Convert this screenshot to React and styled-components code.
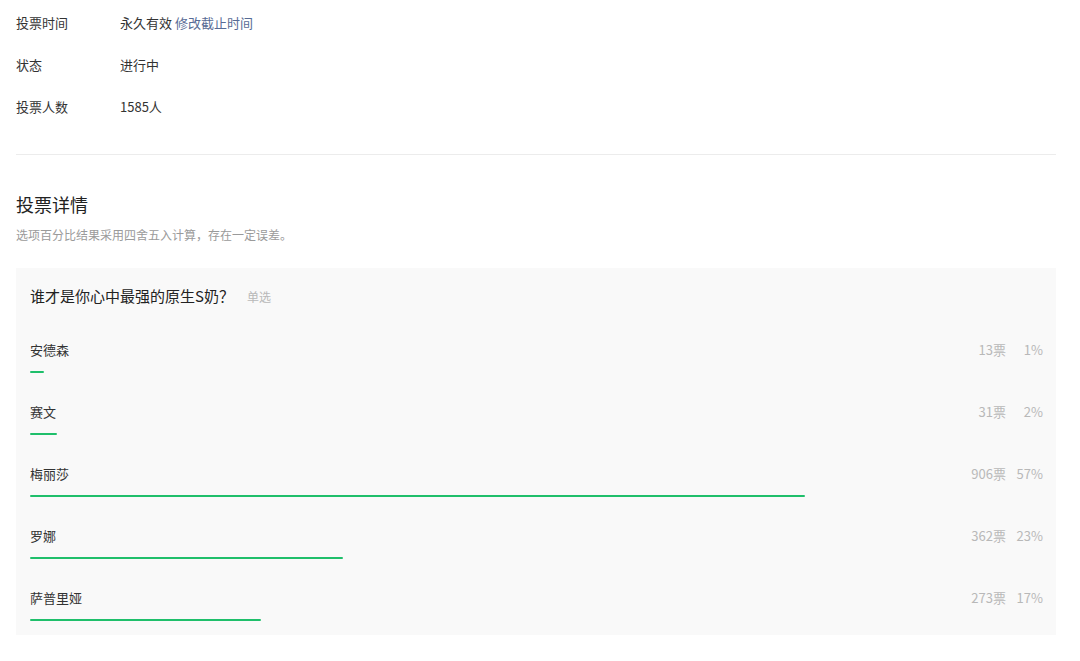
import React from "react";
import styled, { createGlobalStyle } from "styled-components";

const Global = createGlobalStyle`
  html, body { margin: 0; padding: 0; background: #fff; }
  body { font-family: "Noto Sans CJK SC", "Noto Sans", sans-serif; color: #333; }
`;

const Page = styled.div`
  padding: 1px 24px 0 16px;
`;

const InfoRow = styled.div`
  display: flex;
  align-items: center;
  height: 42px;
  font-size: 13px;
`;

const Label = styled.div`
  width: 104px;
  color: #333;
`;

const Value = styled.div`
  color: #333;
`;

const Link = styled.a`
  color: #576b95;
  text-decoration: none;
  margin-left: 3px;
`;

const Divider = styled.div`
  height: 1px;
  background: #ececec;
  margin: 27px 0 36px;
`;

const Title = styled.h2`
  margin: 0;
  font-size: 18px;
  font-weight: 400;
  line-height: 26px;
  color: #222;
`;

const Subtitle = styled.p`
  margin: 9px 0 24px;
  font-size: 12px;
  line-height: 18px;
  color: #9a9a9a;
`;

const Card = styled.div`
  background: #f9f9f9;
  padding: 16px 13px 14px 14px;
`;

const Question = styled.div`
  font-size: 15px;
  line-height: 24px;
  color: #222;
  display: flex;
  align-items: baseline;
  margin-bottom: 33px;
`;

const Tag = styled.span`
  font-size: 12px;
  color: #b8b8b8;
  margin-left: 13px;
`;

const Option = styled.div`
  & + & {
    margin-top: 31px;
  }
`;

const OptionHead = styled.div`
  display: flex;
  align-items: center;
  line-height: 16px;
  font-size: 13px;
`;

const Name = styled.div`
  flex: 1;
  color: #333;
`;

const Votes = styled.span`
  color: #b8b8b8;
`;

const Percent = styled.span`
  color: #b8b8b8;
  min-width: 37px;
  text-align: right;
`;

const Bar = styled.div`
  height: 2px;
  margin-top: 13px;
  background: #1fbf6b;
  border-radius: 1px;
`;

const options = [
  { name: "安德森", votes: 13, pct: 1 },
  { name: "赛文", votes: 31, pct: 2 },
  { name: "梅丽莎", votes: 906, pct: 57 },
  { name: "罗娜", votes: 362, pct: 23 },
  { name: "萨普里娅", votes: 273, pct: 17 },
];

export default function App() {
  return (
    <Page>
      <Global />
      <InfoRow>
        <Label>投票时间</Label>
        <Value>
          永久有效<Link href="#">修改截止时间</Link>
        </Value>
      </InfoRow>
      <InfoRow>
        <Label>状态</Label>
        <Value>进行中</Value>
      </InfoRow>
      <InfoRow>
        <Label>投票人数</Label>
        <Value>1585人</Value>
      </InfoRow>
      <Divider />
      <Title>投票详情</Title>
      <Subtitle>选项百分比结果采用四舍五入计算，存在一定误差。</Subtitle>
      <Card>
        <Question>
          谁才是你心中最强的原生S奶？<Tag>单选</Tag>
        </Question>
        {options.map((o) => (
          <Option key={o.name}>
            <OptionHead>
              <Name>{o.name}</Name>
              <Votes>{o.votes}票</Votes>
              <Percent>{o.pct}%</Percent>
            </OptionHead>
            <Bar style={{ width: `${o.pct * 13.6}px` }} />
          </Option>
        ))}
      </Card>
    </Page>
  );
}
